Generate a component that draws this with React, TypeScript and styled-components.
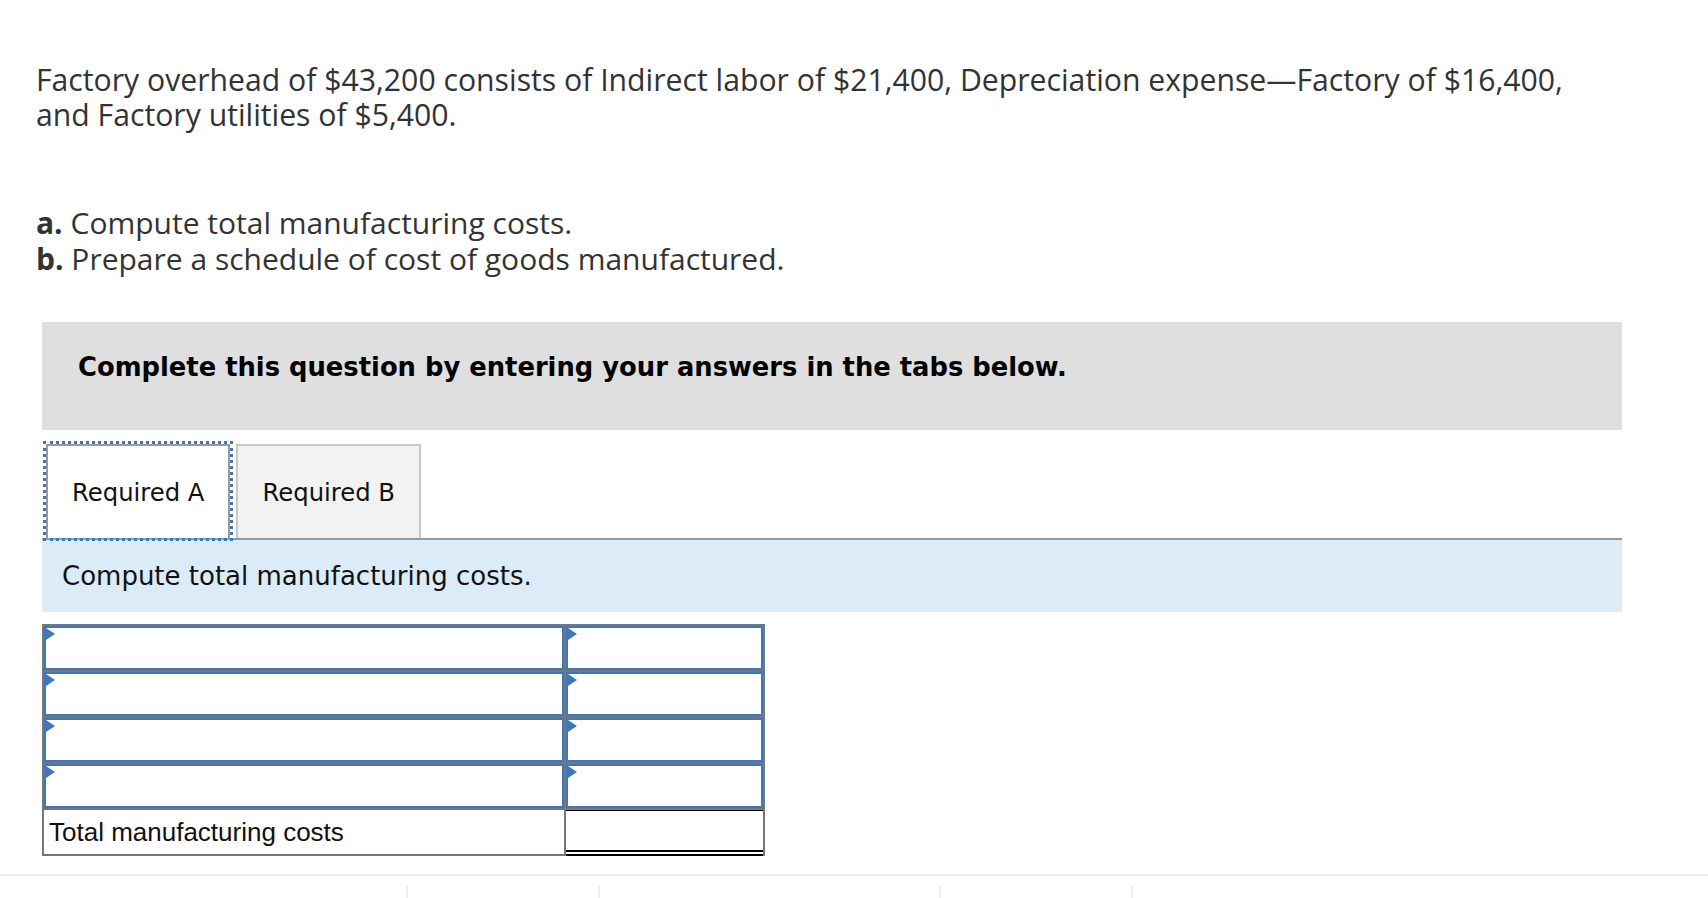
import React from 'react';
import styled, { createGlobalStyle } from 'styled-components';

const colours = {
  text: '#333333',
  panelGray: '#dfdfdf',
  panelBlue: '#dcebf8',
  tabBorder: '#9a9a9a',
  tabIdle: '#f2f2f2',
  tabIdleBorder: '#c6c6c6',
  inputBlue: '#3e77bc',
  grid: '#777777',
  footer: '#f0f0f0',
};

const GlobalStyle = createGlobalStyle`
  body {
    margin: 0;
    background: #ffffff;
    font-family: "Open Sans", "Liberation Sans", sans-serif;
    color: ${colours.text};
  }
`;

const rows = ['row1', 'row2', 'row3', 'row4'];

const App: React.FC = () => {
  return (
    <>
      <GlobalStyle />
      <Main>
        <Intro>
          Factory overhead of $43,200 consists of Indirect labor of $21,400, Depreciation expense—Factory of $16,400,
          and Factory utilities of $5,400.
        </Intro>
        <Parts>
          <li><b>a.</b> Compute total manufacturing costs.</li>
          <li><b>b.</b> Prepare a schedule of cost of goods manufactured.</li>
        </Parts>
        <Question>
          <Instructions>Complete this question by entering your answers in the tabs below.</Instructions>
          <TabBar>
            <Tab active>Required A</Tab>
            <Tab>Required B</Tab>
          </TabBar>
          <Prompt>Compute total manufacturing costs.</Prompt>
          <Grid>
            {rows.map((r) => (
              <React.Fragment key={r}>
                <InputCell />
                <InputCell />
              </React.Fragment>
            ))}
            <TotalLabel>Total manufacturing costs</TotalLabel>
            <TotalValue />
          </Grid>
        </Question>
      </Main>
      <Footer>
        <FooterNav>
          <FooterItem width={192} />
          <FooterItem width={341} />
          <FooterItem width={192} />
          <FooterItem width={192} />
        </FooterNav>
      </Footer>
    </>
  );
};

const Main = styled.main`
  padding: 62px 0 0 36px;
`;

const Intro = styled.p`
  margin: 0;
  width: 1586px;
  font-size: 30.2px;
  line-height: 35px;
`;

const Parts = styled.ul`
  list-style: none;
  margin: 73px 0 0;
  padding: 0;
  font-size: 30px;
  line-height: 36px;
  b {
    font-weight: 700;
  }
`;

const Question = styled.section`
  margin: 45px 0 0 6px;
  width: 1580px;
`;

const Instructions = styled.div`
  box-sizing: border-box;
  height: 108px;
  padding: 29px 36px 0;
  background: ${colours.panelGray};
  font-family: "DejaVu Sans", Verdana, sans-serif;
  font-weight: 700;
  font-size: 25.8px;
  line-height: 32px;
  color: #000;
`;

const TabBar = styled.div`
  display: flex;
  gap: 6px;
  margin-top: 14px;
  padding-left: 4px;
  border-bottom: 2px solid ${colours.tabBorder};
`;

const Tab = styled.div<{ active?: boolean }>`
  display: flex;
  align-items: center;
  box-sizing: border-box;
  height: 94px;
  padding: 0 24px;
  border: 2px solid ${({ active }) => (active ? colours.tabBorder : colours.tabIdleBorder)};
  border-bottom: none;
  background: ${({ active }) => (active ? '#ffffff' : colours.tabIdle)};
  font-family: "DejaVu Sans", Verdana, sans-serif;
  font-size: 24.3px;
  color: #111;
  ${({ active }) => active && `
    outline: 3px dotted ${colours.inputBlue};
    outline-offset: 0;
  `}
`;

const Prompt = styled.div`
  display: flex;
  align-items: center;
  height: 72px;
  padding-left: 20px;
  background: ${colours.panelBlue};
  font-family: "DejaVu Sans", Verdana, sans-serif;
  font-size: 26px;
  color: #111;
`;

const Grid = styled.div`
  display: grid;
  grid-template-columns: 520px 197px;
  grid-auto-rows: 44px;
  gap: 2px;
  width: fit-content;
  margin-top: 12px;
  padding: 2px;
  background: ${colours.grid};
`;

const InputCell = styled.div`
  position: relative;
  background: #ffffff;
  border: 2px solid ${colours.inputBlue};
  &::before {
    content: '';
    position: absolute;
    top: 0;
    left: 0;
    border-left: 9px solid ${colours.inputBlue};
    border-top: 6px solid transparent;
    border-bottom: 6px solid transparent;
  }
`;

const TotalLabel = styled.div`
  display: flex;
  align-items: center;
  padding-left: 5px;
  background: #ffffff;
  font-family: "Liberation Sans", Arial, sans-serif;
  font-size: 26px;
  color: #111;
`;

const TotalValue = styled.div`
  margin-bottom: -2px;
  background: #ffffff;
  border-top: 1px solid #000;
  border-bottom: 6px double #000;
`;

const Footer = styled.footer`
  margin-top: 18px;
  border-top: 2px solid ${colours.footer};
  padding-top: 10px;
`;

const FooterNav = styled.nav`
  display: flex;
  padding-left: 406px;
`;

const FooterItem = styled.div<{ width: number }>`
  box-sizing: border-box;
  width: ${({ width }) => width}px;
  height: 20px;
  border-left: 2px solid ${colours.footer};
`;

export default App;
